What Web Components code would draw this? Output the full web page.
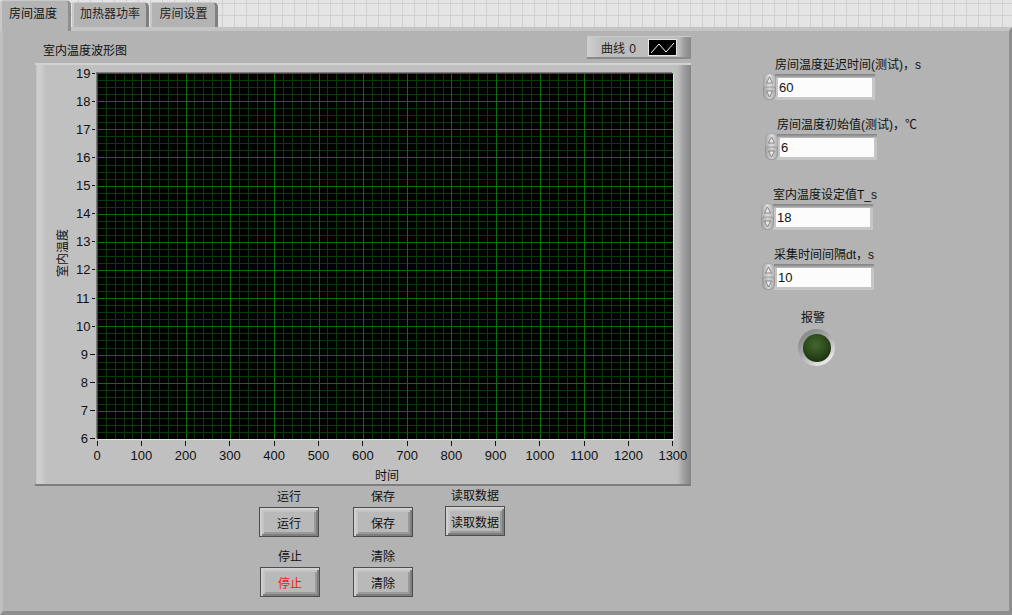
<!DOCTYPE html>
<html>
<head>
<meta charset="utf-8">
<title>房间温度</title>
<style>
html,body{margin:0;padding:0;background:#b3b3b3;}
body{font:12px "Liberation Sans","Noto Sans CJK SC",sans-serif;color:#111;width:1012px;height:615px;overflow:hidden;}
</style>
</head>
<body>
<lv-window>
  <lv-tab slot="tabs" selected>房间温度</lv-tab>
  <lv-tab slot="tabs" w="77">加热器功率</lv-tab>
  <lv-tab slot="tabs" w="68">房间设置</lv-tab>

  <div slot="left">
    <lv-chart title="室内温度波形图" plot="曲线 0" xlabel="时间" ylabel="室内温度"></lv-chart>
    <lv-buttons></lv-buttons>
  </div>

  <lv-numeric slot="right" label="房间温度延迟时间(测试)，s" value="60" style="margin:0 0 0 763px"></lv-numeric>
  <lv-numeric slot="right" label="房间温度初始值(测试)，℃" value="6" style="margin:18px 0 0 765px"></lv-numeric>
  <lv-numeric slot="right" label="室内温度设定值T_s" value="18" style="margin:28px 0 0 761px"></lv-numeric>
  <lv-numeric slot="right" label="采集时间间隔dt，s" value="10" style="margin:18px 0 0 762px"></lv-numeric>
  <lv-led slot="right" label="报警" style="margin:20px 0 0 798px"></lv-led>
</lv-window>

<script>
// front panel shell: tab strip on the grid, grey panel under it
class LvWindow extends HTMLElement{
  constructor(){
    super();
    this.attachShadow({mode:'open'}).innerHTML=`
<style>
:host{display:block;width:1012px;height:615px;position:relative;overflow:hidden;
  background-color:#e4e4e4;
  background-image:linear-gradient(#cfcfcf 1px,transparent 1px),linear-gradient(90deg,#cfcfcf 1px,transparent 1px);
  background-size:12px 12px;background-position:6px 3px;}
.tabs{display:flex;height:27px;align-items:flex-end;position:relative;z-index:2;}
.panel{height:588px;box-sizing:border-box;background:#b3b3b3;
  border-top:4px solid #c4c4c4;border-left:3px solid #bfbfbf;border-right:3px solid #8e8e8e;border-bottom:4px solid #8e8e8e;
  display:flex;}
.left{width:760px;flex:none;}
.right{display:flex;flex-direction:column;margin-left:-763px;padding-top:27px;}
.left ::slotted(div){margin-left:32px;}
</style>
<div class="tabs"><slot name="tabs"></slot></div>
<div class="panel">
  <div class="left"><slot name="left"></slot></div>
  <div class="right"><slot name="right"></slot></div>
</div>`;
  }
}
customElements.define('lv-window',LvWindow);

class LvTab extends HTMLElement{
  constructor(){
    super();
    this.attachShadow({mode:'open'}).innerHTML=`
<style>
:host{display:block;box-sizing:border-box;width:71px;height:25px;margin-right:1px;flex:none;
  background:#b3b3b3;border:1px solid #c9c9c9;border-right:3px solid #7f7f7f;border-left:2px solid #c8c8c8;border-bottom:0;
  border-top-left-radius:3px;border-top-right-radius:5px;text-align:center;line-height:23px;font-size:12px;color:#222;}
:host([selected]){height:31px;margin-bottom:-4px;line-height:26px;position:relative;z-index:3;color:#111;
  border-right-color:#8f8f8f;padding-right:4px;}
</style><slot></slot>`;
  }
  connectedCallback(){
    if(this.hasAttribute('w'))this.style.width=this.getAttribute('w')+'px';
  }
}
customElements.define('lv-tab',LvTab);

// waveform graph: title + legend row, then the framed plot with its two scales
class LvChart extends HTMLElement{
  constructor(){
    super();
    this.attachShadow({mode:'open'});
  }
  connectedCallback(){
    const W=576,H=366;
    let g='';
    // minor first so the major lines stay on top
    for(let i=0;i<=52;i++){ if(i%4){const y=Math.round(i*H/52)+.5; g+=`<line x1="0" x2="${W}" y1="${y}" y2="${y}" stroke="#0a3a0a"/>`;} }
    for(let i=0;i<=65;i++){ if(i%5){const x=Math.round(i*W/65)+.5; g+=`<line y1="0" y2="${H}" x1="${x}" x2="${x}" stroke="#0a3a0a"/>`;} }
    for(let i=0;i<=13;i++){
      const y=Math.round(i*H/13)+.5, x=Math.round(i*W/13)+.5;
      g+=`<line x1="0" x2="${W}" y1="${y}" y2="${y}" stroke="#0a6e0a"/><line y1="0" y2="${H}" x1="${x}" x2="${x}" stroke="#0a6e0a"/>`;
    }
    let ys='',xs='';
    for(let v=19;v>=6;v--)ys+=`<div class="yt"><span>${v}</span><i></i></div>`;
    for(let v=0;v<=1300;v+=100)xs+=`<div class="xt"><i></i><span>${v}</span></div>`;
    this.shadowRoot.innerHTML=`
<style>
:host{display:block;width:656px;}
.top{display:flex;justify-content:space-between;align-items:flex-end;height:32px;padding-left:8px;}
.title{line-height:14px;padding-bottom:5px;font-size:12px;}
.legend{display:flex;align-items:center;box-sizing:border-box;width:104px;height:23px;margin-bottom:4px;
  background:linear-gradient(90deg,#cfcfcf 0,#c4c4c4 10px,#bdbdbd 14px,#bdbdbd 92px,#999 98px,#888 100%);
  border-top:1px solid #cacaca;border-bottom:2px solid #8a8a8a;padding-left:14px;font-size:12px;color:#222;word-spacing:1px;}
.legend svg{display:block;margin-left:12px;}
.frame{height:423px;box-sizing:border-box;display:flex;flex-direction:column;
  background:#c0c0c0;border-top:2px solid #d2d2d2;border-bottom:2px solid #7d7d7d;position:relative;}
.bevel-l,.bevel-r{position:absolute;top:0;bottom:0;}
.bevel-l{left:0;width:11px;background:linear-gradient(90deg,#a8a8a8 0,#cfcfcf 2px,#cdcdcd 6px,#c0c0c0 11px);}
.bevel-r{right:0;width:18px;background:linear-gradient(90deg,#c0c0c0 0,#bcbcbc 5px,#9a9a9a 12px,#858585 18px);}
.row{display:flex;margin-top:8px;height:367px;position:relative;z-index:1;}
.yname{width:41px;display:flex;align-items:center;justify-content:flex-end;padding-bottom:6px;box-sizing:border-box;}
.yname span{writing-mode:vertical-rl;text-orientation:sideways;transform:rotate(180deg);font-size:12px;line-height:14px;margin-right:6px;}
.yaxis{width:21px;display:flex;flex-direction:column;justify-content:space-between;height:366px;}
.yt{height:0;display:flex;align-items:center;justify-content:flex-end;font-size:13px;color:#111;}
.yt i{display:block;width:5px;height:1px;background:#111;margin:0 2px;}
.plot{width:576px;height:366px;background:#000;display:block;box-shadow:-1px -1px 0 #7c7c7c,1px 1px 0 #e4e4e4;}
.xaxis{margin:1px 0 0 62px;width:576px;display:flex;justify-content:space-between;height:28px;position:relative;z-index:1;}
.xt{width:0;display:flex;flex-direction:column;align-items:center;font-size:13px;color:#111;}
.xt i{display:block;flex:none;width:1px;height:5px;background:#111;margin-bottom:2px;}
.xname{text-align:center;margin-left:64px;width:576px;font-size:12px;line-height:14px;position:relative;z-index:1;}
</style>
<div class="top">
  <div class="title">${this.getAttribute('title')}</div>
  <div class="legend">${this.getAttribute('plot')}
    <svg width="29" height="17"><rect width="29" height="17" fill="#000"/><rect x=".5" y=".5" width="28" height="16" fill="none" stroke="#e6e6e6"/><path d="M3 14 L11 5 L18 13 L26 4" fill="none" stroke="#fff"/></svg>
  </div>
</div>
<div class="frame">
  <div class="bevel-l"></div><div class="bevel-r"></div>
  <div class="row">
    <div class="yname"><span>${this.getAttribute('ylabel')}</span></div>
    <div class="yaxis">${ys}</div>
    <svg class="plot" width="${W}" height="${H}" shape-rendering="crispEdges">${g}</svg>
  </div>
  <div class="xaxis">${xs}</div>
  <div class="xname">${this.getAttribute('xlabel')}</div>
</div>`;
  }
}
customElements.define('lv-chart',LvChart);

class LvButton extends HTMLElement{
  constructor(){
    super();
    this.attachShadow({mode:'open'});
  }
  connectedCallback(){
    const t=this.getAttribute('text');
    this.shadowRoot.innerHTML=`
<style>
:host{display:block;width:60px;text-align:center;font-size:12px;}
.l{height:16px;line-height:16px;margin:1px 0 2px;}
button{display:block;box-sizing:border-box;width:60px;height:30px;padding:0;font:inherit;color:inherit;
  border:1px solid #4d4d4d;border-width:1px;
  background:#b9b9b9;box-shadow:inset 2px 2px 0 #d0d0d0,inset -2px -2px 0 #7e7e7e,inset 4px 4px 0 #c4c4c4,inset -4px -4px 0 #9a9a9a;}
:host([alarm]) button{color:#f01818;}
</style>
<div class="l">${t}</div><button type="button">${t}</button>`;
  }
}
customElements.define('lv-button',LvButton);

class LvButtons extends HTMLElement{
  constructor(){
    super();
    this.attachShadow({mode:'open'}).innerHTML=`
<style>
:host{display:flex;margin-left:224px;gap:33px;padding-top:2px;}
.col{display:flex;flex-direction:column;gap:11px;}
</style>
<div class="col">
  <lv-button text="运行"></lv-button>
  <lv-button text="停止" alarm style="margin-left:1px"></lv-button>
</div>
<div class="col">
  <lv-button text="保存"></lv-button>
  <lv-button text="清除"></lv-button>
</div>
<div class="col" style="margin:-1px 0 0 -1px">
  <lv-button text="读取数据"></lv-button>
</div>`;
  }
}
customElements.define('lv-buttons',LvButtons);

class LvNumeric extends HTMLElement{
  constructor(){
    super();
    this.attachShadow({mode:'open'});
  }
  connectedCallback(){
    this.shadowRoot.innerHTML=`
<style>
:host{display:block;width:180px;font-size:12px;}
.l{height:15px;line-height:15px;margin-left:12px;white-space:nowrap;margin-bottom:1px;color:#111;}
.r{display:flex;align-items:flex-start;}
.spin{width:13px;height:27px;display:flex;flex-direction:column;margin:-1px -1px 0 0;flex:none;position:relative;z-index:1;}
.spin svg{display:block;}
.box{box-sizing:border-box;width:100px;height:26px;padding:4px 3px 3px;
  background:linear-gradient(180deg,#808080 0,#a8a8a8 3px,#c6c6c6 4px);}
.v{background:#fcfcfc;height:19px;width:94px;box-sizing:border-box;padding-left:1px;line-height:19px;font-size:13px;color:#111;}
</style>
<div class="l">${this.getAttribute('label')}</div>
<div class="r">
  <div class="spin">
    <svg width="13" height="14"><defs><linearGradient id="u" x1="0" x2="1"><stop offset="0" stop-color="#a8a8a8"/><stop offset=".5" stop-color="#dcdcdc"/><stop offset="1" stop-color="#b4b4b4"/></linearGradient></defs><path d="M.5 14V6.500Q.5 .5 6.500 .5T12.500 6.500V14Z" fill="url(#u)" stroke="#a4a4a4"/><path d="M6.500 4L3.500 10H9.500Z" fill="#ececec" stroke="#6e6e6e" stroke-width=".8"/></svg>
    <svg width="13" height="13"><defs><linearGradient id="d" x1="0" x2="1"><stop offset="0" stop-color="#a0a0a0"/><stop offset=".5" stop-color="#d4d4d4"/><stop offset="1" stop-color="#acacac"/></linearGradient></defs><path d="M.5 0V6.500Q.5 12.500 6.500 12.500T12.500 6.500V0Z" fill="url(#d)" stroke="#969696"/><path d="M6.500 10L3.500 4H9.500Z" fill="#ececec" stroke="#6e6e6e" stroke-width=".8"/></svg>
  </div>
  <div class="box"><div class="v">${this.getAttribute('value')}</div></div>
</div>`;
  }
}
customElements.define('lv-numeric',LvNumeric);

class LvLed extends HTMLElement{
  constructor(){
    super();
    this.attachShadow({mode:'open'}).innerHTML=`
<style>
:host{display:block;width:37px;font-size:12px;}
.l{height:16px;line-height:16px;margin-left:3px;white-space:nowrap;margin-bottom:3px;}
.ring{width:37px;height:37px;border-radius:50%;display:flex;align-items:center;justify-content:center;
  background:linear-gradient(145deg,#858585 10%,#a8a8a8 45%,#f2f2f2 90%);}
.lamp{width:28px;height:28px;border-radius:50%;
  background:radial-gradient(circle at 45% 38%,#456530 0,#2f4f1e 40%,#16290c 85%,#0e1c08 100%);}
</style>
<div class="l">${this.getAttribute('label')}</div>
<div class="ring"><div class="lamp"></div></div>`;
  }
}
customElements.define('lv-led',LvLed);
</script>
</body>
</html>
